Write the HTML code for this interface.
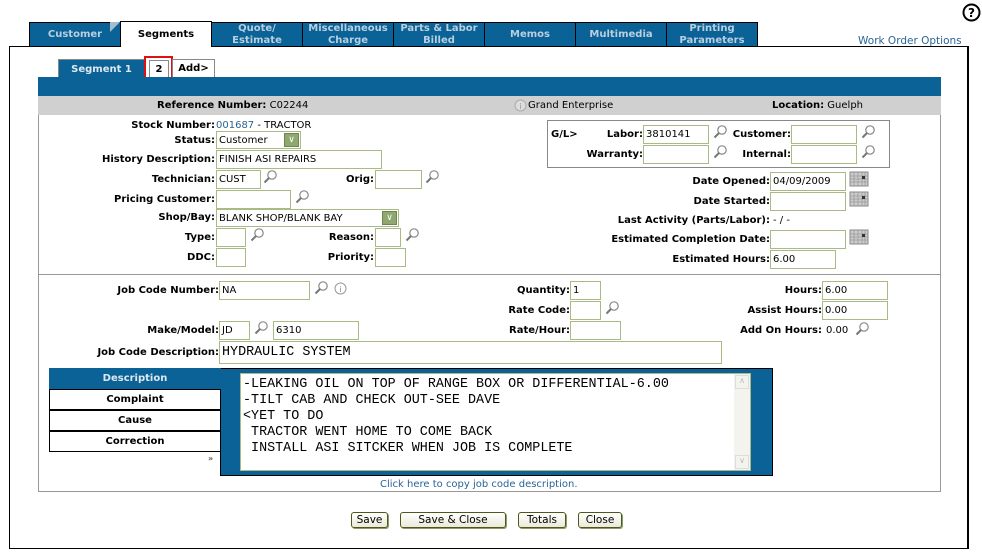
<!DOCTYPE html>
<html><head><meta charset="utf-8"><style>
*{margin:0;padding:0;box-sizing:border-box}
body{width:982px;height:552px;position:relative;background:#fff;font-family:"DejaVu Sans","Liberation Sans",sans-serif;font-size:10px;color:#000;overflow:hidden}
div,span{position:absolute}
.tab{background:#0a6296;color:#b9cfe0;font-weight:bold;font-size:10px;text-align:center;border:1px solid #000;border-bottom:none;line-height:11.5px;display:flex;align-items:center;justify-content:center;top:22px;height:24px}
.l{font-weight:bold;text-align:right;white-space:nowrap;padding-top:1px}
.i{border:1px solid #a9bb84;background:#fff;height:19px;padding-left:2px;line-height:17px;white-space:nowrap}
.v{white-space:nowrap;padding-top:1px}
.btn{border:1px solid #4a5a1a;border-radius:3px;background:linear-gradient(#fff,#ece9d8);height:16px;line-height:14px;text-align:center;top:512px;font-size:10.5px;box-shadow:1px 1px 0 #8a9a6a}
.d{border:1px solid #000;background:#fff;font-weight:bold;text-align:center;height:21px;line-height:19px;width:172px;left:49px}
</style></head><body>
<svg style="position:absolute;left:962px;top:3px" width="19" height="19" viewBox="0 0 19 19"><circle cx="9.5" cy="9.5" r="8" fill="#fff" stroke="#000" stroke-width="2"/><text x="9.5" y="14" text-anchor="middle" font-family="DejaVu Sans" font-weight="bold" font-size="12">?</text></svg>

<div style="left:9px;top:46px;width:960px;height:503px;border:1px solid #000;border-right:2px solid #000"></div>
<div class="tab" style="left:29px;width:92px">Customer</div>
<div style="left:110px;top:22px;width:0;height:0;border-left:10px solid #a7bccd;border-bottom:10px solid transparent"></div>
<div class="tab" style="left:120px;width:92px;top:21px;height:26px;background:#fff;color:#000">Segments</div>
<div class="tab" style="left:211px;width:92px">Quote/<br>Estimate</div>
<div class="tab" style="left:302px;width:92px">Miscellaneous<br>Charge</div>
<div class="tab" style="left:393px;width:92px">Parts &amp; Labor<br>Billed</div>
<div class="tab" style="left:484px;width:92px">Memos</div>
<div class="tab" style="left:575px;width:92px">Multimedia</div>
<div class="tab" style="left:666px;width:92px">Printing<br>Parameters</div>
<div class="v" style="left:858px;top:34px;color:#2a6496;font-size:10.5px">Work Order Options</div>

<div style="left:58px;top:59px;width:87px;height:19px;background:#0a6296;color:#dfe8f0;font-weight:bold;text-align:center;line-height:19px;border:1px solid #888;border-bottom:none">Segment 1</div>
<div style="left:149px;top:60px;width:20px;height:18px;border:1px solid #888;font-weight:bold;text-align:center;line-height:17px">2</div>
<div style="left:144px;top:56px;width:29px;height:23px;border:2px solid #e01010"></div>
<div style="left:172px;top:59px;width:43px;height:19px;border:1px solid #888;border-bottom:none;font-weight:bold;text-align:center;line-height:17px">Add&gt;</div>

<div style="left:38px;top:77px;width:903px;height:415px;border:1px solid #999"></div>
<div style="left:38px;top:77px;width:903px;height:19px;background:#0a6296"></div>
<div style="left:38px;top:96px;width:903px;height:19px;background:#d0d0d0"></div>
<div class="v" style="left:157px;top:99px"><b>Reference Number:</b> C02244</div>
<svg style="position:absolute;left:514px;top:99px" width="13" height="13"><circle cx="6.5" cy="6.5" r="5.5" fill="#ddd" stroke="#aaa"/><text x="6.5" y="10" text-anchor="middle" font-size="8" fill="#999">i</text></svg>
<div class="v" style="left:528px;top:99px">Grand Enterprise</div>
<div class="v" style="left:772px;top:99px"><b>Location:</b> Guelph</div>

<div class="l" style="left:0;width:215px;top:119px">Stock Number:</div><div class="v" style="left:216px;top:119px"><span style="position:static;color:#2a6496">001687</span> - TRACTOR</div>
<div class="l" style="left:0;width:215px;top:134px">Status:</div><div class="i" style="left:216px;top:131px;width:85px;height:18px">Customer</div>
<div style="left:284px;top:133px;width:15px;height:14px;background:#8fa870;border:1px solid #6d8650;color:#fff;font-size:9px;text-align:center;line-height:12px">&#8744;</div>
<div class="l" style="left:0;width:215px;top:153px">History Description:</div><div class="i" style="left:216px;top:150px;width:166px">FINISH ASI REPAIRS</div>
<div class="l" style="left:0;width:215px;top:173px">Technician:</div><div class="i" style="left:216px;top:170px;width:45px">CUST</div>
<div class="l" style="left:0;width:374px;top:173px">Orig:</div><div class="i" style="left:375px;top:170px;width:47px"></div>
<div class="l" style="left:0;width:215px;top:193px">Pricing Customer:</div><div class="i" style="left:216px;top:190px;width:75px"></div>
<div class="l" style="left:0;width:215px;top:211px">Shop/Bay:</div><div class="i" style="left:216px;top:209px;width:183px;height:18px">BLANK SHOP/BLANK BAY</div>
<div style="left:382px;top:211px;width:15px;height:14px;background:#8fa870;border:1px solid #6d8650;color:#fff;font-size:9px;text-align:center;line-height:12px">&#8744;</div>
<div class="l" style="left:0;width:215px;top:231px">Type:</div><div class="i" style="left:216px;top:228px;width:30px"></div>
<div class="l" style="left:0;width:374px;top:231px">Reason:</div><div class="i" style="left:375px;top:228px;width:26px"></div>
<div class="l" style="left:0;width:215px;top:251px">DDC:</div><div class="i" style="left:216px;top:248px;width:30px"></div>
<div class="l" style="left:0;width:374px;top:251px">Priority:</div><div class="i" style="left:375px;top:248px;width:31px"></div>

<div style="left:547px;top:120px;width:343px;height:48px;border:1px solid #888"></div>
<div class="l" style="left:551px;top:128px">G/L&gt;</div>
<div class="l" style="left:0;width:643px;top:128px">Labor:</div><div class="i" style="left:643px;top:125px;width:66px">3810141</div>
<div class="l" style="left:0;width:791px;top:128px">Customer:</div><div class="i" style="left:791px;top:125px;width:66px"></div>
<div class="l" style="left:0;width:643px;top:148px">Warranty:</div><div class="i" style="left:643px;top:145px;width:66px"></div>
<div class="l" style="left:0;width:791px;top:148px">Internal:</div><div class="i" style="left:791px;top:145px;width:66px"></div>
<div class="l" style="left:0;width:770px;top:175px">Date Opened:</div><div class="i" style="left:770px;top:172px;width:76px">04/09/2009</div>
<div class="l" style="left:0;width:770px;top:195px">Date Started:</div><div class="i" style="left:770px;top:192px;width:76px"></div>
<div class="l" style="left:0;width:770px;top:214px">Last Activity (Parts/Labor):</div><div class="v" style="left:773px;top:214px">- / -</div>
<div class="l" style="left:0;width:770px;top:233px">Estimated Completion Date:</div><div class="i" style="left:770px;top:230px;width:76px"></div>
<div class="l" style="left:0;width:770px;top:253px">Estimated Hours:</div><div class="i" style="left:770px;top:250px;width:66px">6.00</div>

<div style="left:38px;top:274px;width:903px;height:1px;background:#999"></div>

<div class="l" style="left:0;width:219px;top:284px">Job Code Number:</div><div class="i" style="left:219px;top:281px;width:91px">NA</div>
<svg style="position:absolute;left:334px;top:282px" width="13" height="13"><circle cx="6.5" cy="6.5" r="5.5" fill="#fff" stroke="#999"/><text x="6.5" y="10" text-anchor="middle" font-size="8" fill="#888">i</text></svg>
<div class="l" style="left:0;width:219px;top:324px">Make/Model:</div><div class="i" style="left:219px;top:321px;width:31px">JD</div>
<div class="i" style="left:273px;top:321px;width:86px">6310</div>
<div class="l" style="left:0;width:219px;top:346px">Job Code Description:</div><div class="i" style="left:219px;top:341px;width:503px;height:23px;font-family:'Liberation Mono',monospace;font-size:13.4px;line-height:22px">HYDRAULIC SYSTEM</div>
<div class="l" style="left:0;width:570px;top:284px">Quantity:</div><div class="i" style="left:570px;top:281px;width:31px">1</div>
<div class="l" style="left:0;width:570px;top:304px">Rate Code:</div><div class="i" style="left:570px;top:301px;width:31px"></div>
<div class="l" style="left:0;width:570px;top:324px">Rate/Hour:</div><div class="i" style="left:570px;top:321px;width:51px"></div>
<div class="l" style="left:0;width:822px;top:284px">Hours:</div><div class="i" style="left:822px;top:281px;width:66px">6.00</div>
<div class="l" style="left:0;width:822px;top:304px">Assist Hours:</div><div class="i" style="left:822px;top:301px;width:66px">0.00</div>
<div class="l" style="left:0;width:822px;top:324px">Add On Hours:</div><div class="v" style="left:826px;top:324px">0.00</div>

<div style="left:220px;top:368px;width:553px;height:108px;background:#0a6296;border:1px solid #000"></div>
<div style="left:49px;top:368px;width:172px;height:22px;background:#0a6296;color:#dfe8f0;font-weight:bold;text-align:center;line-height:22px">Description</div>
<div class="d" style="top:389px">Complaint</div>
<div class="d" style="top:410px">Cause</div>
<div class="d" style="top:431px">Correction</div>
<div style="left:208px;top:454px;font-size:8px;color:#555;font-weight:bold">&#187;</div>
<div style="left:240px;top:373px;width:511px;height:98px;background:#fff;border:1px solid #a9bb84;font-family:'Liberation Mono',monospace;font-size:13.4px;line-height:16px;padding:3px 2px;white-space:pre">-LEAKING OIL ON TOP OF RANGE BOX OR DIFFERENTIAL-6.00
-TILT CAB AND CHECK OUT-SEE DAVE
&lt;YET TO DO
 TRACTOR WENT HOME TO COME BACK
 INSTALL ASI SITCKER WHEN JOB IS COMPLETE</div>
<div style="left:734px;top:374px;width:16px;height:96px;background:#f4f4ee"></div>
<div style="left:735px;top:375px;width:14px;height:14px;border:1px solid #ddd;color:#bbb;font-size:8px;text-align:center">&#8743;</div>
<div style="left:735px;top:455px;width:14px;height:14px;border:1px solid #ddd;color:#bbb;font-size:8px;text-align:center">&#8744;</div>
<div class="v" style="left:380px;top:478px;color:#2a6496;font-size:10px">Click here to copy job code description.</div>

<div class="btn" style="left:351px;width:37px">Save</div>
<div class="btn" style="left:400px;width:106px">Save &amp; Close</div>
<div class="btn" style="left:518px;width:48px">Totals</div>
<div class="btn" style="left:578px;width:44px">Close</div>

<svg width="982" height="552" style="position:absolute;left:0;top:0;pointer-events:none">
<defs><g id="mg"><circle cx="9" cy="5" r="4.2" fill="#fff" stroke="#888" stroke-width="1.2"/><line x1="6" y1="8" x2="1.5" y2="12.5" stroke="#777" stroke-width="2"/></g>
<g id="cal"><rect x="0" y="0" width="18" height="14" fill="#ccc" stroke="#888"/><path d="M0 4H18M0 7H18M0 10H18M4 0V14M8 0V14M12 0V14M15 0V14" stroke="#999" stroke-width="0.8"/><rect x="12" y="4" width="3" height="3" fill="#333"/></g></defs>
<use href="#mg" x="263" y="170"/><use href="#mg" x="425" y="170"/><use href="#mg" x="295" y="190"/>
<use href="#mg" x="250" y="228"/><use href="#mg" x="405" y="228"/>
<use href="#mg" x="713" y="125"/><use href="#mg" x="861" y="125"/><use href="#mg" x="713" y="145"/><use href="#mg" x="861" y="145"/>
<use href="#mg" x="314" y="281"/><use href="#mg" x="254" y="321"/><use href="#mg" x="605" y="301"/><use href="#mg" x="855" y="322"/>
<use href="#cal" x="850" y="172"/><use href="#cal" x="850" y="192"/><use href="#cal" x="850" y="230"/>
</svg>
</body></html>
